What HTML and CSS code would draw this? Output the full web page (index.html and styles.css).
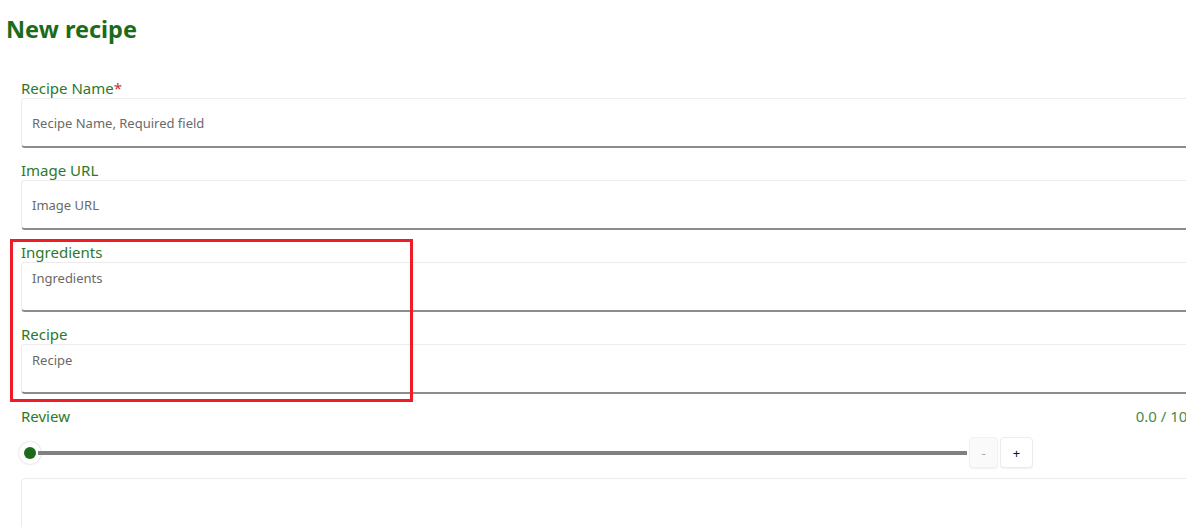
FILE: index.html
```html
<!DOCTYPE html>
<html lang="en">
<head>
<meta charset="utf-8">
<title>New recipe</title>
<link rel="stylesheet" href="styles.css">
</head>
<body>
<div class="viewport">
  <h1 class="title">New recipe</h1>
  <form class="form">
    <div class="field">
      <label class="label">Recipe Name<span class="req">*</span></label>
      <input class="input" type="text" placeholder="Recipe Name, Required field">
    </div>
    <div class="field">
      <label class="label">Image URL</label>
      <input class="input" type="text" placeholder="Image URL">
    </div>
    <div class="field">
      <label class="label">Ingredients</label>
      <textarea class="textarea" placeholder="Ingredients"></textarea>
    </div>
    <div class="field">
      <label class="label">Recipe</label>
      <textarea class="textarea" placeholder="Recipe"></textarea>
    </div>
    <div class="field">
      <div class="review-head">
        <label class="label">Review</label>
        <span class="score">0.0 / 10.0</span>
      </div>
      <div class="slider-row">
        <div class="slider">
          <span class="thumb"><span class="dot"></span></span>
          <span class="track"></span>
        </div>
        <button class="step step-disabled" type="button">-</button>
        <button class="step" type="button">+</button>
      </div>
      <div class="review-box"></div>
    </div>
  </form>
  <div class="highlight"></div>
</div>
</body>
</html>
```
FILE: styles.css
```css
* { box-sizing: border-box; }
html, body { margin: 0; padding: 0; background: #ffffff; }
body { font-family: "Noto Sans", "Open Sans", sans-serif; }
.viewport {
  position: relative;
  width: 1186px;
  height: 527px;
  overflow: hidden;
}
.title {
  margin: 0;
  padding: 13px 0 0 6px;
  font-size: 23.5px;
  line-height: 32px;
  font-weight: 700;
  color: #1b6b1b;
}
.form {
  width: 1240px;
  padding: 33px 0 0 21px;
  display: flex;
  flex-direction: column;
  gap: 12px;
}
.field { display: flex; flex-direction: column; }
.label {
  font-size: 15px;
  line-height: 20px;
  color: #2b7a2b;
}
.req { color: #d32f2f; }
.input, .textarea {
  display: block;
  width: 100%;
  height: 50px;
  border: 1px solid #ececec;
  border-bottom: 2px solid #8c8c8c;
  border-radius: 4px;
  background: #fff;
  font-family: inherit;
  font-size: 13px;
  color: #333;
  padding: 0 10px;
  outline: none;
}
.textarea {
  resize: none;
  padding: 5px 10px;
  line-height: 20px;
}
.input::placeholder, .textarea::placeholder { color: #6a6a6a; opacity: 1; }
.review-head {
  display: flex;
  justify-content: space-between;
  padding-right: 40px;
}
.score {
  font-size: 15px;
  line-height: 20px;
  color: #4a8a4a;
}
.slider-row {
  display: flex;
  align-items: center;
  gap: 2px;
  margin-top: 11px;
  width: 1012px;
}
.slider {
  flex: 1;
  display: flex;
  align-items: center;
  height: 31px;
}
.thumb {
  width: 22px;
  height: 22px;
  margin-left: -2px;
  border-radius: 50%;
  background: #fff;
  box-shadow: 0 0 2px rgba(0,0,0,0.25);
  display: flex;
  align-items: center;
  justify-content: center;
  flex: none;
}
.dot {
  width: 12px;
  height: 12px;
  border-radius: 50%;
  background: #1b6b1b;
}
.track {
  flex: 1;
  height: 4px;
  background: #808080;
  margin-left: -3px;
}
.step {
  width: 33px;
  height: 31px;
  border: 1px solid #ececec;
  border-radius: 4px;
  background: #fff;
  font-family: inherit;
  font-size: 13px;
  color: #111;
  padding: 0;
  box-shadow: 0 1px 1px rgba(0,0,0,0.06);
}
.step-disabled {
  width: 29px;
  background: #fafafa;
  color: #aaa;
  border-color: #f2f2f2;
}
.review-box {
  margin-top: 10px;
  height: 60px;
  border: 1px solid #ececec;
  border-radius: 4px;
}
.highlight {
  position: absolute;
  left: 10px;
  top: 239px;
  width: 403px;
  height: 163px;
  border: 3px solid #ee1c25;
  pointer-events: none;
}
```
